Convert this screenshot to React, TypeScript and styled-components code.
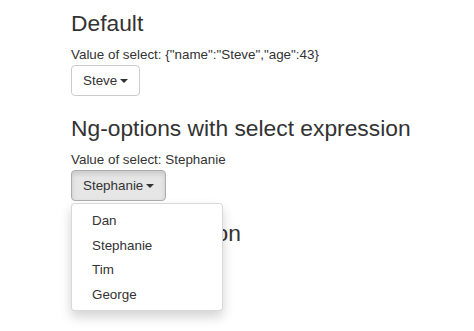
import React from "react";
import styled, { createGlobalStyle } from "styled-components";

const GlobalStyle = createGlobalStyle`
  html, body {
    margin: 0;
    padding: 0;
    background: #fff;
  }
  body {
    font-family: "Liberation Sans", Arial, sans-serif;
    font-size: 13.4px;
    line-height: 18.6px;
    color: #333;
  }
`;

const people = [
  { name: "Dan", age: 21 },
  { name: "Stephanie", age: 32 },
  { name: "Tim", age: 28 },
  { name: "George", age: 55 },
];

const App = () => {
  return (
    <>
      <GlobalStyle />
      <Page>
        <Section>
          <Heading>Default</Heading>
          <Label>Value of select: {'{"name":"Steve","age":43}'}</Label>
          <Dropdown>
            <ToggleButton>
              Steve <Caret />
            </ToggleButton>
          </Dropdown>
        </Section>

        <Section>
          <Heading>Ng-options with select expression</Heading>
          <Label>Value of select: Stephanie</Label>
          <Dropdown>
            <ToggleButton active>
              Stephanie <Caret />
            </ToggleButton>
            <Menu>
              {people.map((p) => (
                <MenuItem key={p.name}>{p.name}</MenuItem>
              ))}
            </Menu>
          </Dropdown>
        </Section>

        <Section>
          <Heading>Ng-repeat option</Heading>
          <Label>Value of select: Tim</Label>
          <Dropdown>
            <ToggleButton>
              Tim <Caret />
            </ToggleButton>
          </Dropdown>
        </Section>
      </Page>
    </>
  );
};

export default App;

const Page = styled.div`
  box-sizing: border-box;
  min-height: 100vh;
  padding: 11px 0 0 71px;
  display: flex;
  flex-direction: column;
  gap: 19.5px;
`;

const Section = styled.div`
  display: flex;
  flex-direction: column;
  align-items: flex-start;
`;

const Heading = styled.h3`
  margin: 0 0 11px;
  font-size: 22.8px;
  line-height: 24.2px;
  font-weight: 500;
  color: #333;
`;

const Label = styled.div`
  font-size: 13.4px;
  line-height: 18.6px;
`;

const Dropdown = styled.div`
  position: relative;
  margin-top: 0.5px;
`;

const ToggleButton = styled.button<{ active?: boolean }>`
  font-family: inherit;
  font-size: 13.4px;
  line-height: 19px;
  color: #333;
  padding: 5px 11px;
  border: 1px solid ${({ active }) => (active ? "#adadad" : "#ccc")};
  border-radius: 4px;
  background: ${({ active }) => (active ? "#e6e6e6" : "#fff")};
  box-shadow: ${({ active }) =>
    active ? "inset 0 3px 5px rgba(0, 0, 0, 0.125)" : "none"};
  display: inline-flex;
  align-items: center;
  gap: 3px;
  cursor: pointer;
`;

const Caret = styled.span`
  display: inline-block;
  width: 0;
  height: 0;
  border-top: 4px solid #333;
  border-left: 4px solid transparent;
  border-right: 4px solid transparent;
  margin-top: 1px;
`;

const Menu = styled.ul`
  position: absolute;
  top: 100%;
  left: 0;
  z-index: 10;
  margin: 2px 0 0;
  padding: 5px 0 3px;
  list-style: none;
  min-width: 150px;
  background: #fff;
  border: 1px solid rgba(0, 0, 0, 0.15);
  border-radius: 4px;
  box-shadow: 0 6px 12px rgba(0, 0, 0, 0.175);
`;

const MenuItem = styled.li`
  padding: 3px 19px 3px 20px;
  line-height: 18.6px;
  font-size: 13.4px;
  color: #333;
  white-space: nowrap;
  cursor: pointer;
`;
